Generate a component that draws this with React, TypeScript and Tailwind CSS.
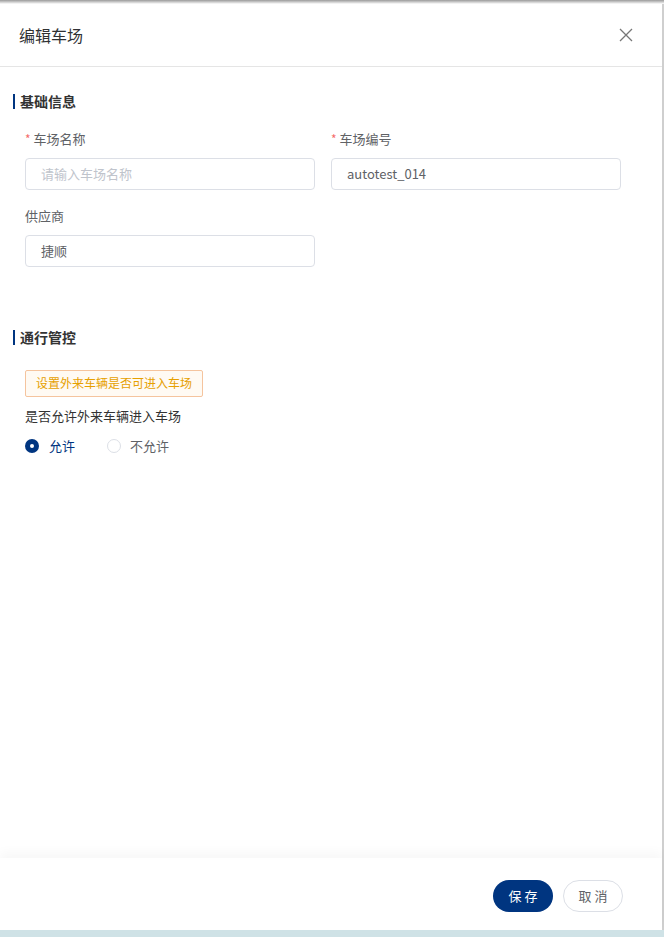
import React from "react";

const font = { fontFamily: '"Microsoft YaHei", "Noto Sans CJK SC", "Noto Sans", sans-serif' };

function Label({ text, required }: { text: string; required?: boolean }) {
  return (
    <div className="flex items-center h-[20px] text-[13px] text-[#606266] mb-[9px]">
      {required && <span className="text-[#f56c6c] text-[12px] mr-[3px] leading-none">*</span>}
      <span>{text}</span>
    </div>
  );
}

function Input({ value, placeholder }: { value?: string; placeholder?: string }) {
  return (
    <div className="h-[32px] w-[290px] border border-[#dcdfe6] rounded-[4px] flex items-center px-[15px] text-[13px]">
      {value ? (
        <span className="text-[#606266]">{value}</span>
      ) : (
        <span className="text-[#c0c4cc]">{placeholder}</span>
      )}
    </div>
  );
}

function SectionTitle({ text }: { text: string }) {
  return (
    <div className="flex items-center h-[16px]">
      <div className="w-[2px] h-[15px] bg-[#003580] mr-[5px]" />
      <span className="text-[14px] font-bold text-[#333]">{text}</span>
    </div>
  );
}

export default function App() {
  return (
    <div style={font} className="w-[664px] h-[937px] bg-white relative overflow-hidden flex flex-col">
      <div className="h-[4px] bg-gradient-to-b from-[#9a9a9a] to-white shrink-0" />
      <div className="flex-1 flex flex-col border-r-2 border-[#cfcfcf]">
        {/* header */}
        <div className="h-[63px] border-b border-[#e5e5e5] flex items-center justify-between pl-[19px] pr-[29px] shrink-0">
          <span className="text-[16px] text-[#303133]">编辑车场</span>
          <svg width="14" height="14" viewBox="0 0 14 14">
            <path d="M1 1 L13 13 M13 1 L1 13" stroke="#777" strokeWidth="1.3" />
          </svg>
        </div>
        {/* body */}
        <div className="flex-1 pl-[13px] pt-[26px]">
          <SectionTitle text="基础信息" />
          <div className="pl-[12px] pt-[20px]">
            <div className="flex gap-[16px]">
              <div>
                <Label text="车场名称" required />
                <Input placeholder="请输入车场名称" />
              </div>
              <div>
                <Label text="车场编号" required />
                <Input value="autotest_014" />
              </div>
            </div>
            <div className="pt-[16px]">
              <Label text="供应商" />
              <Input value="捷顺" />
            </div>
          </div>
          <div className="pt-[62px]">
            <SectionTitle text="通行管控" />
          </div>
          <div className="pl-[12px] pt-[24px]">
            <div className="inline-flex items-center h-[27px] px-[10px] border border-[#f5c49e] bg-[#fffaf3] rounded-[2px] text-[12px] text-[#e6a000]">
              设置外来车辆是否可进入车场
            </div>
            <div className="pt-[9px] text-[13px] text-[#333] h-[30px] flex items-center">是否允许外来车辆进入车场</div>
            <div className="flex items-center h-[28px] mt-[5px] text-[13px]">
              <div className="flex items-center mr-[32px]">
                <div className="w-[14px] h-[14px] rounded-full bg-[#003580] flex items-center justify-center mr-[10px]">
                  <div className="w-[4px] h-[4px] rounded-full bg-white" />
                </div>
                <span className="text-[#003580]">允许</span>
              </div>
              <div className="flex items-center">
                <div className="w-[14px] h-[14px] rounded-full border border-[#dcdfe6] mr-[9px]" />
                <span className="text-[#606266]">不允许</span>
              </div>
            </div>
          </div>
        </div>
        {/* footer */}
        <div className="h-[72px] shrink-0 pt-[4px] shadow-[0_-6px_10px_rgba(0,0,0,0.03)] flex items-center justify-end pr-[39px] gap-[10px]">
          <div className="w-[60px] h-[32px] rounded-full bg-[#003580] text-white text-[13px] flex items-center justify-center tracking-[3px] pl-[3px]">
            保存
          </div>
          <div className="w-[60px] h-[32px] rounded-full border border-[#dcdfe6] text-[#606266] text-[13px] flex items-center justify-center tracking-[3px] pl-[3px]">
            取消
          </div>
        </div>
      </div>
      <div className="h-[7px] bg-[#cfe2e6] shrink-0" />
    </div>
  );
}
